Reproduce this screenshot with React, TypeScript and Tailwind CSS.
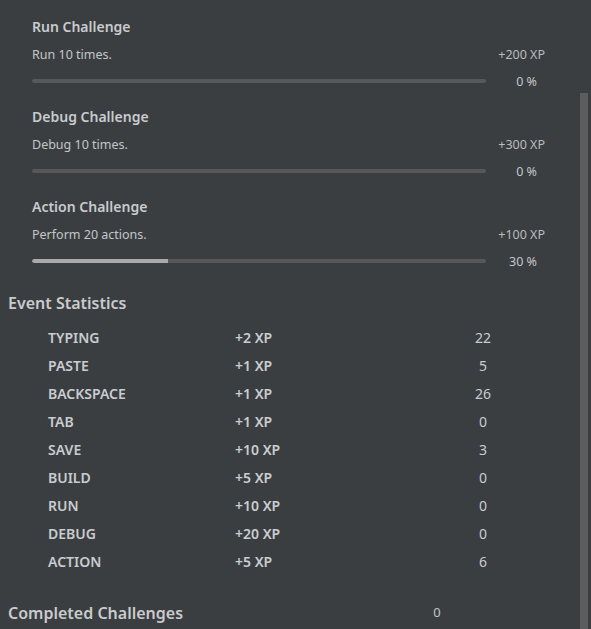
import React from "react";

type Challenge = { title: string; desc: string; xp: number; progress: number };

const challenges: Challenge[] = [
  { title: "Run Challenge", desc: "Run 10 times.", xp: 200, progress: 0 },
  { title: "Debug Challenge", desc: "Debug 10 times.", xp: 300, progress: 0 },
  { title: "Action Challenge", desc: "Perform 20 actions.", xp: 100, progress: 30 },
];

const stats: [string, number, number][] = [
  ["TYPING", 2, 22],
  ["PASTE", 1, 5],
  ["BACKSPACE", 1, 26],
  ["TAB", 1, 0],
  ["SAVE", 10, 3],
  ["BUILD", 5, 0],
  ["RUN", 10, 0],
  ["DEBUG", 20, 0],
  ["ACTION", 5, 6],
];

const ChallengeBlock: React.FC<{ c: Challenge }> = ({ c }) => (
  <div className="pl-8 w-[545px]">
    <div className="h-5 flex items-center text-[14px] font-semibold text-[#c9cbcd]">{c.title}</div>
    <div className="mt-[9px] h-5 flex items-center justify-between text-[12.5px] text-[#c4c6c8]">
      <span>{c.desc}</span>
      <span className="text-[#b9bbbd]">+{c.xp} XP</span>
    </div>
    <div className="mt-[6px] h-5 flex items-center">
      <div className="w-[454px] h-1 rounded-full bg-[#56585a] overflow-hidden">
        <div className="h-full bg-[#a9aaab] rounded-l-full" style={{ width: `${c.progress}%` }} />
      </div>
      <span className="w-[51px] text-right text-[12.5px] text-[#c4c6c8] pt-[2px]">{c.progress} %</span>
    </div>
  </div>
);

export default function App() {
  return (
    <div
      className="w-[591px] h-[629px] overflow-hidden bg-[#3b3e41] flex"
      style={{ fontFamily: '"Noto Sans", "Open Sans", sans-serif' }}
    >
      <div className="flex-1 pt-4">
        <div className="flex flex-col gap-[15px]">
          {challenges.map((c) => (
            <ChallengeBlock key={c.title} c={c} />
          ))}
        </div>

        <div className="mt-5 pl-2 h-6 flex items-center text-[16px] font-semibold text-[#c9cbcd]">
          Event Statistics
        </div>

        <div className="mt-2 flex flex-col">
          {stats.map(([name, xp, count]) => (
            <div key={name} className="h-7 flex items-center pl-12 text-[14px] font-semibold text-[#c9ccd0]">
              <span className="w-[187px]">{name}</span>
              <span className="w-[200px]">+{xp} XP</span>
              <span className="w-24 text-center font-normal">{count}</span>
            </div>
          ))}
        </div>

        <div className="mt-[26px] pl-2 h-6 flex items-center text-[16px] font-semibold text-[#c9cbcd]">
          <span className="w-[425px]">Completed Challenges</span>
          <span className="w-2 text-center text-[13px] font-normal text-[#c4c6c8]">0</span>
        </div>
      </div>

      <div className="w-[11px] flex justify-start">
        <div className="mt-[93px] w-2 h-[536px] bg-[#5c5d5f]" />
      </div>
    </div>
  );
}
